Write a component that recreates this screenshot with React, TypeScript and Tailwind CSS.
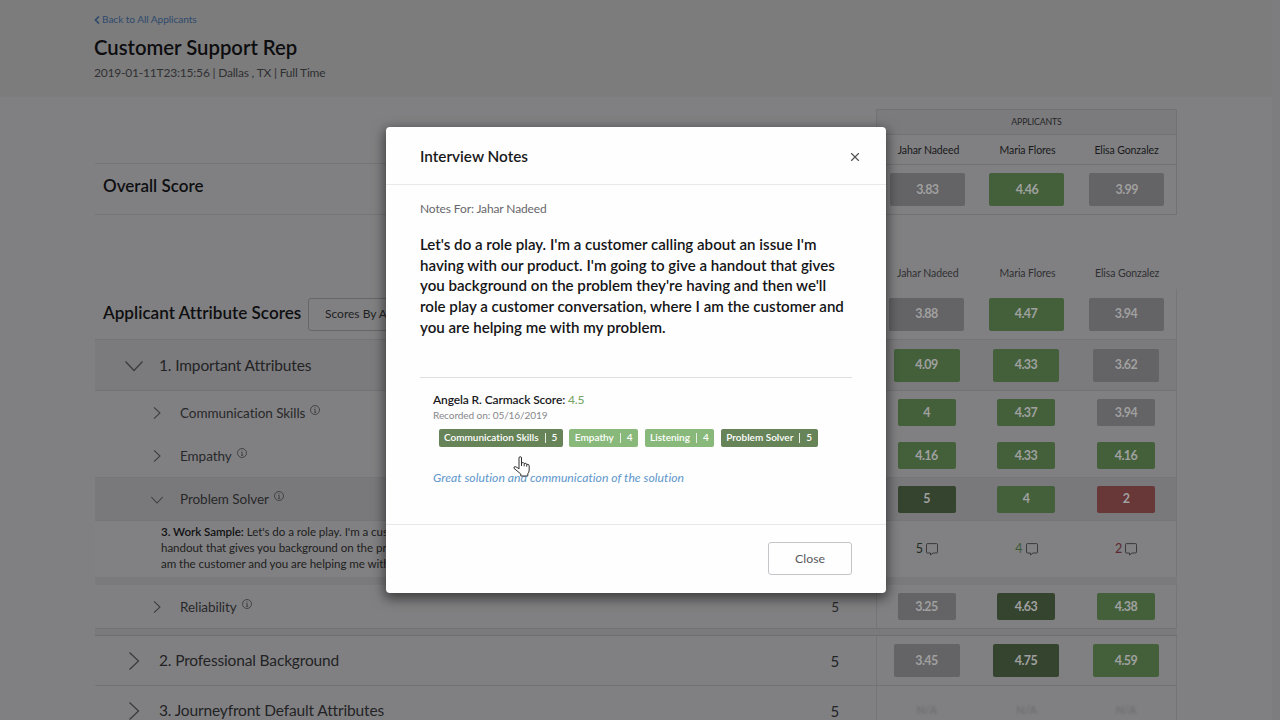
import React from 'react';
import { X } from 'lucide-react';

const GREY = 'bg-[#646365]';
const GREEN = 'bg-[#43603b]';
const DARK = 'bg-[#35442f]';
const RED = 'bg-[#683738]';

const big = 'h-[33px] w-[75px]';
const mid = 'h-[33px] w-[66px]';
const small = 'h-[27px] w-[58px]';

function Chip({ value, color, size }: { value: string; color: string; size: string }) {
  return (
    <span className={`flex items-center justify-center rounded-[2px] pt-px text-[12.5px] font-bold tracking-[-0.6px] text-[#a0a0a0] ${size} ${color}`}>{value}</span>
  );
}

function Scores({ items, size }: { items: [string, string][]; size: string }) {
  return (
    <div className="grid w-[301px] shrink-0 grid-cols-[99px_100px_100px] self-stretch border-x border-[#757577]">
      {items.map(([value, color], i) => (
        <div key={i} className="flex items-center justify-center">
          <Chip value={value} color={color} size={size} />
        </div>
      ))}
    </div>
  );
}

function Names({ dim }: { dim?: boolean }) {
  return (
    <div className={`grid grid-cols-3 pl-[2px] pt-px text-center text-[10.5px] tracking-[-0.1px] ${dim ? 'text-[#303032]' : 'text-[#19191b]'}`}>
      <span>Jahar Nadeed</span>
      <span>Maria Flores</span>
      <span>Elisa Gonzalez</span>
    </div>
  );
}

function Chevron({ down, large }: { down?: boolean; large?: boolean }) {
  return (
    <svg
      className={`${large ? 'h-[18px] w-[18px]' : 'h-3 w-3'} ${down ? 'rotate-90' : ''} shrink-0 overflow-visible text-[#3c3c3e]`}
      viewBox="0 0 18 18"
      fill="none"
      stroke="currentColor"
      strokeWidth={large ? 1.3 : 1.6}
    >
      <path d="M4.5 0.5 L13.5 9 L4.5 17.5" />
    </svg>
  );
}

function Info() {
  return (
    <svg className="mb-[7px] ml-[5px] h-[10px] w-[10px] shrink-0 text-[#363638]" viewBox="0 0 10 10" fill="none" stroke="currentColor" strokeWidth="0.8">
      <circle cx="5" cy="5" r="4.5" />
      <path d="M4.2 4.3 H5.1 V7.2 M4 7.3 H6.2 M4.6 2.7 H5.4" />
    </svg>
  );
}

function Comment({ value, color }: { value: string; color: string }) {
  return (
    <div className={`flex items-center justify-center gap-[3px] pt-px text-[12.5px] ${color}`}>
      {value}
      <svg className="h-[13px] w-3 text-[#333335]" viewBox="0 0 12 13" fill="none" stroke="currentColor" strokeWidth="0.9">
        <path d="M1.5 .6 H10.5 Q11.5 .6 11.5 1.6 V9 Q11.5 10 10.5 10 H7 L4.5 12 V10 H1.5 Q.5 10 .5 9 V1.6 Q.5 .6 1.5 .6Z" />
      </svg>
    </div>
  );
}

function Category({ label, down, height, children }: { label: string; down?: boolean; height: string; children: React.ReactNode }) {
  return (
    <div className={`flex items-center border-b border-[#737375] ${height} ${down ? 'bg-[#7b7b7d]' : ''}`}>
      <div className="flex flex-1 items-center pl-[30px] pt-px text-[15.5px] tracking-[-0.15px] text-[#232325]">
        <Chevron large down={down} />
        <span className="ml-4">{label}</span>
        <span className="ml-auto mr-[37px] text-[15px]">5</span>
      </div>
      {children}
    </div>
  );
}

function Attribute({ label, down, height, tone = '', children }: { label: string; down?: boolean; height: string; tone?: string; children: React.ReactNode }) {
  return (
    <div className={`flex items-center ${height} ${tone}`}>
      <div className="flex flex-1 items-center pl-14 pt-px text-[13.5px] tracking-[-0.05px] text-[#28282a]">
        <Chevron down={down} />
        <span className="ml-[17px]">{label}</span>
        <Info />
        <span className="ml-auto mr-[37px]">5</span>
      </div>
      {children}
    </div>
  );
}

function Tag({ label, value, dark }: { label: string; value: string; dark?: boolean }) {
  return (
    <span className={`flex h-[18px] items-center justify-center rounded-[2px] px-[5.5px] text-[10px] font-semibold text-white ${dark ? 'bg-[#678459]' : 'bg-[#88b97a]'}`}>
      {label}
      <i className="mx-[6px] h-[10px] w-px bg-[#e6eee3]" />
      {value}
    </span>
  );
}

export default function App() {
  return (
    <div className="relative h-[720px] w-[1280px] overflow-hidden bg-[#808082] font-['Lato',sans-serif] [font-variant-ligatures:none]">
      <header className="h-[97px] bg-[#7c7c7d] pl-[94px] pt-[13px]">
        <div className="flex h-[14px] items-center gap-[2px] text-[10.1px] tracking-[-0.05px] text-[#2f4a6b]">
          <svg className="h-2 w-[6px]" viewBox="0 0 6 8" fill="none" stroke="currentColor" strokeWidth="1.7">
            <path d="M5 .5 L1.5 4 L5 7.5" />
          </svg>
          Back to All Applicants
        </div>
        <h1 className="mt-[7px] text-[20.3px] font-semibold leading-[27px] text-[#0d0d0f]">Customer Support Rep</h1>
        <p className="mt-[3px] text-[12px] leading-[17px] tracking-[-0.2px] text-[#303032]">2019-01-11T23:15:56 | Dallas , TX | Full Time</p>
      </header>

      <main className="ml-[95px] w-[1082px] pt-3">
        <section className="flex h-[106px]">
          <div className="mt-[54px] flex h-[52px] flex-1 items-center border-y border-[#757577] pb-[6px] pl-2 text-[17px] font-semibold text-[#0e0e10]">Overall Score</div>
          <div className="w-[301px] border border-[#727274]">
            <div className="flex h-[25px] items-center justify-center border-b border-[#727274] bg-[#7b7b7d] pl-5 text-[8.8px] tracking-[-0.15px] text-[#262628]">APPLICANTS</div>
            <div className="flex h-[30px] flex-col justify-center border-b border-[#727274] pt-px"><Names /></div>
            <div className="grid h-[49px] grid-cols-3">
              {[['3.83', GREY], ['4.46', GREEN], ['3.99', GREY]].map(([v, c]) => (
                <div key={v} className="flex items-center justify-center pl-px">
                  <Chip value={v} color={c} size={big} />
                </div>
              ))}
            </div>
          </div>
        </section>

        <section className="mt-[50px]">
          <div className="ml-auto h-6 w-[301px]"><Names dim /></div>
          <div className="flex h-[51px] items-center border-b border-[#747476]">
            <div className="flex flex-1 items-center pl-2">
              <h2 className="w-[205px] whitespace-nowrap pb-[3px] text-[17.1px] font-semibold text-[#0e0e10]">Applicant Attribute Scores</h2>
              <div className="flex h-[33px] w-[180px] items-center rounded-[3px] border border-[#666668] pl-4 text-[12px] text-[#202022]">Scores By Attribute</div>
            </div>
            <Scores size={big} items={[['3.88', GREY], ['4.47', GREEN], ['3.94', GREY]]} />
          </div>

          <Category label="1. Important Attributes" down height="h-[51px]">
            <Scores size={mid} items={[['4.09', GREEN], ['4.33', GREEN], ['3.62', GREY]]} />
          </Category>
          <Attribute label="Communication Skills" height="h-[43px]">
            <Scores size={small} items={[['4', GREEN], ['4.37', GREEN], ['3.94', GREY]]} />
          </Attribute>
          <Attribute label="Empathy" height="h-[43px]">
            <Scores size={small} items={[['4.16', GREEN], ['4.33', GREEN], ['4.16', GREEN]]} />
          </Attribute>
          <Attribute label="Problem Solver" down height="h-[44px]" tone="bg-[#79797b] border-y border-[#767678]">
            <Scores size={small} items={[['5', DARK], ['4', GREEN], ['2', RED]]} />
          </Attribute>
          <div className="flex h-[56px] bg-[#818183]">
            <p className="flex-1 whitespace-nowrap pl-[66px] pt-[3px] text-[11.6px] leading-4 tracking-[-0.06px] text-[#1e1e20]">
              <b className="font-semibold text-[#101012]">3. Work Sample:</b> Let's do a role play. I'm a customer calling<br />
              handout that gives you background on the problem they're<br />
              am the customer and you are helping me with my problem.
            </p>
            <div className="grid w-[301px] grid-cols-3 border-x border-[#757577]">
              <Comment value="5" color="text-[#202c1e]" />
              <Comment value="4" color="text-[#3c5a36]" />
              <Comment value="2" color="text-[#5c2830]" />
            </div>
          </div>
          <div className="h-2 bg-[#7a7a7c]" />
          <Attribute label="Reliability" height="h-[44px]" tone="border-b border-[#727274]">
            <Scores size={small} items={[['3.25', GREY], ['4.63', DARK], ['4.38', GREEN]]} />
          </Attribute>
          <div className="h-[7px] border-b border-[#6e6e70] bg-[#7a7a7c]" />
          <Category label="2. Professional Background" height="h-[50px]">
            <Scores size={mid} items={[['3.45', GREY], ['4.75', DARK], ['4.59', GREEN]]} />
          </Category>
          <Category label="3. Journeyfront Default Attributes" height="h-[50px]">
            <div className="grid w-[301px] grid-cols-3 items-center self-stretch border-x border-[#747476] text-center text-[11px] font-bold text-[#6f6f71]">
              <span className="blur-[1px]">N/A</span>
              <span className="blur-[1px]">N/A</span>
              <span className="blur-[1px]">N/A</span>
            </div>
          </Category>
        </section>
      </main>

      <div className="absolute right-0 top-0 h-full w-2 bg-[#7d7d7f]" />

      <div className="absolute left-[386px] top-[127px] h-[466px] w-[500px] rounded-[4px] bg-[#fefefe] shadow-[0_4px_12px_2px_rgba(0,0,0,0.5)]">
        <div className="flex h-[58px] items-center justify-between border-b border-[#e9e9eb] pl-[34px] pr-6 pt-[2px]">
          <h3 className="text-[15.3px] font-semibold text-[#19191b]">Interview Notes</h3>
          <X size={14} strokeWidth={2} className="text-[#555]" />
        </div>
        <div className="h-[340px] border-b border-[#e9e9eb] px-[34px] pt-[15px]">
          <p className="text-[12px] leading-[18px] tracking-[-0.12px] text-[#67676b]">Notes For: Jahar Nadeed</p>
          <p className="mt-[16px] whitespace-nowrap text-[15.1px] font-semibold leading-[20.7px] text-[#151517]">
            Let's do a role play. I'm a customer calling about an issue I'm<br />
            having with our product. I'm going to give a handout that gives<br />
            you background on the problem they're having and then we'll<br />
            role play a customer conversation, where I am the customer and<br />
            you are helping me with my problem.
          </p>
          <div className="mt-[39.25px] border-t border-[#dedee0] pl-[13px] pt-[14px]">
            <p className="text-[12px] font-semibold leading-4 tracking-[-0.12px] text-[#19191b]">Angela R. Carmack Score: <span className="font-medium text-[#79a564]">4.5</span></p>
            <p className="text-[10.1px] leading-[15px] tracking-[-0.1px] text-[#88888c]">Recorded on: 05/16/2019</p>
            <div className="ml-[5.5px] mt-[6px] flex gap-[6.5px]">
              <Tag label="Communication Skills" value="5" dark />
              <Tag label="Empathy" value="4" />
              <Tag label="Listening" value="4" />
              <Tag label="Problem Solver" value="5" dark />
            </div>
            <p className="mt-[23px] text-[12.2px] italic leading-4 tracking-[0.02px] text-[#6096cb]">Great solution and communication of the solution</p>
          </div>
        </div>
        <div className="flex justify-end pr-[34px] pt-[17px]">
          <button className="h-[33px] w-[84px] rounded-[3px] border border-[#c4c5c9] pt-px text-[12.3px] text-[#58585c]">Close</button>
        </div>
      </div>

      <svg className="absolute left-[513px] top-[456px] h-[21px] w-[18px]" viewBox="0 0 18 21" fill="white" stroke="#333" strokeWidth="1" strokeLinejoin="round">
        <path d="M6 13 V2 Q6 .7 7.3 .7 Q8.5 .7 8.5 2 V7 Q10.8 5.8 11.2 7.5 Q13.3 6.6 13.7 8.3 Q16.2 7.8 16.2 10 V14 Q16 16.5 14.8 17.7 V20 H7.8 V18 L1 12.3 Q.5 10.6 2.3 10.7 Q4 10.9 6 13Z" />
        <path d="M8.5 7 V10 M11.2 7.5 V10.3 M13.7 8.3 V10.7" />
      </svg>
    </div>
  );
}
